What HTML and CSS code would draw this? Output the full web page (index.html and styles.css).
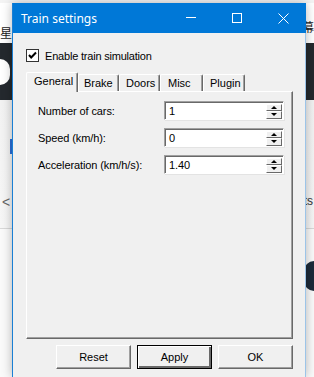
FILE: index.html
```html
<!DOCTYPE html>
<html lang="en">
<head>
    <meta charset="UTF-8">
    <meta name="viewport" content="width=device-width, initial-scale=1.0">
    <title>Train settings</title>
    <link rel="stylesheet" href="styles.css">
</head>
<body>
    <!-- desktop behind the dialog -->
    <div class="desktop">
        <div class="bg-top">
            <span class="bg-cjk left">星大</span>
            <span class="bg-cjk right">幕</span>
        </div>
        <div class="bg-header">
            <span class="bg-logo"></span>
        </div>
        <div class="bg-main">
            <span class="bg-mark"></span>
            <div class="bg-nav">
                <span class="bg-arrow">&lt;</span>
                <span class="bg-word">ts</span>
            </div>
        </div>
        <div class="bg-bottom">
            <span class="bg-avatar"></span>
        </div>
    </div>

    <div class="window">
        <div class="titlebar">
            <span class="title">Train settings</span>
            <div class="caption-btns">
                <span class="caption-btn">
                    <svg width="10" height="10" viewBox="0 0 10 10"><line x1="0" y1="4.5" x2="10" y2="4.5" stroke="#fff" stroke-width="1"/></svg>
                </span>
                <span class="caption-btn">
                    <svg width="10" height="10" viewBox="0 0 10 10"><rect x="0.5" y="0.5" width="9" height="9" fill="none" stroke="#fff" stroke-width="1"/></svg>
                </span>
                <span class="caption-btn">
                    <svg width="11" height="11" viewBox="0 0 11 11"><path d="M0.5 0.5 L10.5 10.5 M10.5 0.5 L0.5 10.5" stroke="#fff" stroke-width="1"/></svg>
                </span>
            </div>
        </div>

        <div class="client">
            <label class="check-row">
                <span class="checkbox">
                    <svg width="11" height="11" viewBox="0 0 11 11"><path d="M2 5 L4.2 7.5 L9 2.5" fill="none" stroke="#000" stroke-width="2"/></svg>
                </span>
                Enable train simulation
            </label>

            <div class="tabs">
                <span class="tab active">General</span>
                <span class="tab">Brake</span>
                <span class="tab">Doors</span>
                <span class="tab">Misc</span>
                <span class="tab">Plugin</span>
            </div>

            <div class="pane">
                <div class="field">
                    <span class="field-label">Number of cars:</span>
                    <div class="spin">
                        <span class="spin-value">1</span>
                        <div class="spin-btns"><span class="spin-up"></span><span class="spin-down"></span></div>
                    </div>
                </div>
                <div class="field">
                    <span class="field-label">Speed (km/h):</span>
                    <div class="spin">
                        <span class="spin-value">0</span>
                        <div class="spin-btns"><span class="spin-up"></span><span class="spin-down"></span></div>
                    </div>
                </div>
                <div class="field">
                    <span class="field-label">Acceleration (km/h/s):</span>
                    <div class="spin">
                        <span class="spin-value">1.40</span>
                        <div class="spin-btns"><span class="spin-up"></span><span class="spin-down"></span></div>
                    </div>
                </div>
            </div>

            <div class="buttons">
                <span class="btn">Reset</span>
                <span class="btn default">Apply</span>
                <span class="btn">OK</span>
            </div>
        </div>
    </div>
</body>
</html>
```

FILE: styles.css
```css
body {
    margin: 0;
    width: 314px;
    height: 377px;
    overflow: hidden;
    position: relative;
    font-family: "Liberation Sans", Arial, sans-serif;
    font-size: 11px;
    color: #000;
}

/* background desktop */
.desktop {
    display: flex;
    flex-direction: column;
    height: 377px;
}

.bg-top {
    height: 43px;
    background: #fff;
    border-top: 3px solid #f4f4f4;
    box-sizing: border-box;
    display: flex;
    justify-content: space-between;
    align-items: flex-end;
    padding-bottom: 3px;
}

.bg-cjk {
    font-family: "Noto Sans CJK SC", sans-serif;
    font-size: 12px;
    color: #222;
    line-height: 14px;
}

.bg-cjk.right { margin-bottom: 6px; }

.bg-header {
    height: 57px;
    background: #24292e;
    display: flex;
    align-items: center;
}

.bg-logo {
    width: 10px;
    height: 26px;
    border-radius: 0 13px 13px 0;
    background: #fff;
}

.bg-main {
    height: 128px;
    background: linear-gradient(#f2f2f2, #f6f6f6);
    border-bottom: 1px solid #d8d8d8;
    display: flex;
    flex-direction: column;
}

.bg-mark {
    width: 2px;
    height: 15px;
    background: #2b6ed6;
    margin: 39px 0 0 10px;
}

.bg-nav {
    display: flex;
    justify-content: space-between;
    margin-top: 40px;
    font-size: 14px;
    color: #666;
}

.bg-arrow { margin-left: 2px; }
.bg-word { color: #333; font-size: 12px; margin-right: 1px; }

.bg-bottom {
    flex: 1;
    background: #fafafa;
    display: flex;
    justify-content: flex-end;
}

.bg-avatar {
    width: 10px;
    height: 30px;
    border-radius: 15px 0 0 15px;
    background: #1c2a3a;
    margin-top: 32px;
}

/* the dialog */
.window {
    position: absolute;
    left: 12px;
    top: 3px;
    bottom: 0;
    width: 294px;
    box-sizing: border-box;
    border-left: 1px solid #1a7fd4;
    border-right: 1px solid #9cc4e8;
    background: #f0f0f0;
    box-shadow: 0 0 10px rgba(0, 0, 0, 0.28);
}

.titlebar {
    height: 30px;
    background: #0078d7;
    color: #fff;
    display: flex;
    align-items: center;
    justify-content: space-between;
    margin-right: -1px;
}

.title {
    font-family: "Noto Sans", "Liberation Sans", sans-serif;
    font-size: 12px;
    padding-left: 8px;
}

.caption-btns {
    display: flex;
}

.caption-btn {
    width: 46px;
    height: 30px;
    display: flex;
    align-items: center;
    justify-content: center;
}

.client {
    padding: 16px 0 0 13px;
}

.check-row {
    display: flex;
    align-items: center;
    gap: 6px;
    height: 13px;
    letter-spacing: -0.2px;
}

.checkbox {
    width: 11px;
    height: 11px;
    border: 1px solid #333;
    background: #fff;
    display: flex;
}

.tabs {
    display: flex;
    align-items: flex-end;
    margin-top: 10px;
    height: 19px;
    position: relative;
    z-index: 1;
}

.tab {
    height: 17px;
    line-height: 16px;
    padding: 0 6px;
    box-sizing: border-box;
    border-top: 1px solid #fff;
    border-left: 1px solid #fff;
    border-right: 1px solid #696969;
    box-shadow: inset -1px 0 0 #a0a0a0;
    border-radius: 2px 2px 0 0;
    color: #000;
}

.tab:nth-child(2) { width: 41px; padding-left: 5px; }
.tab:nth-child(3) { width: 41px; padding-left: 6px; }
.tab:nth-child(4) { width: 43px; padding-left: 7px; }
.tab:nth-child(5) { width: 42px; padding-left: 6px; }

.tab.active {
    width: 52px;
    height: 20px;
    margin-bottom: -1px;
    padding-left: 7px;
    line-height: 16px;
    background: #f0f0f0;
}

.pane {
    width: 267px;
    height: 248px;
    box-sizing: border-box;
    border-top: 1px solid #fff;
    border-left: 1px solid #fff;
    border-right: 1px solid #696969;
    border-bottom: 1px solid #696969;
    box-shadow: inset -1px -1px 0 #a0a0a0;
    padding: 9px 0 0 11px;
    display: flex;
    flex-direction: column;
    gap: 8px;
}

.field {
    display: flex;
    align-items: center;
    height: 19px;
    letter-spacing: -0.1px;
}

.field-label {
    width: 126px;
}

.spin {
    width: 120px;
    height: 19px;
    box-sizing: border-box;
    background: #fff;
    border-top: 1px solid #a0a0a0;
    border-left: 1px solid #a0a0a0;
    border-right: 1px solid #fff;
    border-bottom: 1px solid #fff;
    box-shadow: inset 1px 1px 0 #696969, 1px 1px 0 #e3e3e3;
    display: flex;
    align-items: center;
    justify-content: space-between;
    padding: 0 1px 0 4px;
}

.spin-value {
    padding-top: 1px;
}

.spin-btns {
    width: 16px;
    height: 15px;
    display: flex;
    flex-direction: column;
    margin-top: 1px;
}

.spin-up,
.spin-down {
    flex: 1;
    background: #f0f0f0;
    border-top: 1px solid #fff;
    border-left: 1px solid #fff;
    border-right: 1px solid #696969;
    border-bottom: 1px solid #696969;
    display: flex;
    align-items: center;
    justify-content: center;
}

.spin-up::after,
.spin-down::after {
    content: "";
    width: 0;
    height: 0;
    border-left: 3px solid transparent;
    border-right: 3px solid transparent;
}

.spin-up::after { border-bottom: 3px solid #000; }
.spin-down::after { border-top: 3px solid #000; }

.buttons {
    display: flex;
    gap: 6px;
    margin: 6px 0 0 30px;
}

.btn {
    width: 75px;
    height: 24px;
    box-sizing: border-box;
    background: #f0f0f0;
    border-top: 1px solid #fff;
    border-left: 1px solid #fff;
    border-right: 1px solid #696969;
    border-bottom: 1px solid #696969;
    box-shadow: inset -1px -1px 0 #a0a0a0;
    display: flex;
    align-items: center;
    justify-content: center;
}

.btn.default {
    border: 1px solid #000;
    box-shadow: inset 1px 1px 0 #fff, inset -2px -2px 0 #696969;
}
```
